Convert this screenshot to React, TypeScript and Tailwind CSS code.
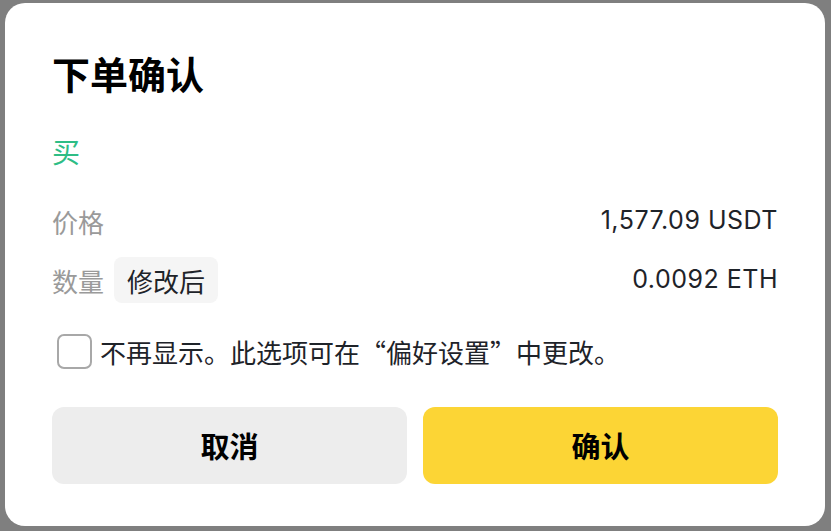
export default function App() {
  return (
    <div
      className="w-[831px] h-[531px] bg-[#7f7f7f] pt-[3px] pl-[5px] pr-[6px] pb-[5px]"
      style={{ fontFamily: '"Noto Sans CJK SC", "Noto Sans", sans-serif' }}
    >
      <div className="bg-white rounded-[20px] h-full px-[47px] pt-[51px] flex flex-col">
        <h1 className="text-[38px] leading-[38px] font-bold text-black">下单确认</h1>
        <div className="mt-[45px] text-[28px] leading-[28px] text-[#2ebd85]">买</div>
        <div className="mt-[33px] h-[46px] flex items-center justify-between">
          <span className="text-[26px] text-[#9a9a9a]">价格</span>
          <span
            className="text-[25px] tracking-[0.5px] text-[#1e2329]"
            style={{ fontFamily: 'Inter, "Noto Sans", sans-serif' }}
          >
            1,577.09 USDT
          </span>
        </div>
        <div className="mt-[13px] h-[46px] flex items-center justify-between">
          <div className="flex items-center">
            <span className="text-[26px] text-[#9a9a9a]">数量</span>
            <span className="ml-[10px] h-[46px] px-[13px] rounded-[8px] bg-[#f5f5f5] flex items-center text-[26px] text-[#1e2329]">
              修改后
            </span>
          </div>
          <span
            className="text-[25px] tracking-[0.5px] text-[#1e2329]"
            style={{ fontFamily: 'Inter, "Noto Sans", sans-serif' }}
          >
            0.0092 ETH
          </span>
        </div>
        <div className="mt-[29px] flex items-center pl-[5px]">
          <div className="w-[35px] h-[35px] rounded-[7px] border-2 border-[#a8a8a8] bg-white shrink-0" />
          <span className="ml-[8px] text-[26px] text-[#1e2329] whitespace-nowrap">不再显示。此选项可在“偏好设置”中更改。</span>
        </div>
        <div className="mt-[36px] grid grid-cols-2 gap-[16px]">
          <button className="h-[77px] rounded-[12px] bg-[#ededed] text-[29px] font-bold text-black">取消</button>
          <button className="h-[77px] rounded-[12px] bg-[#fcd535] text-[29px] font-bold text-black">确认</button>
        </div>
      </div>
    </div>
  );
}
